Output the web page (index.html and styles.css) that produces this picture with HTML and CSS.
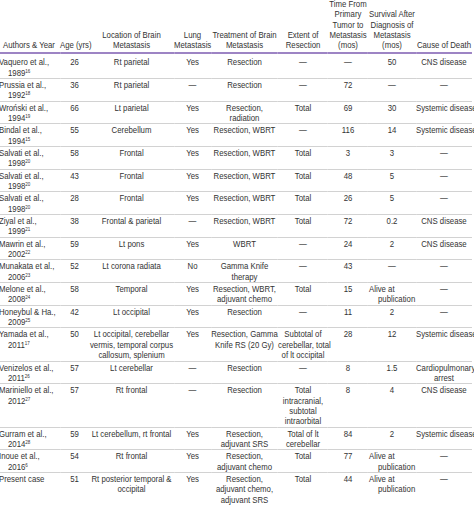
FILE: index.html
```html
<!DOCTYPE html>
<html lang="en">
<head>
<meta charset="utf-8">
<title>Reported cases of brain metastasis</title>
<link rel="stylesheet" href="styles.css">
</head>
<body>
<table class="cases">
  <colgroup>
    <col class="c-auth"><col class="c-age"><col class="c-loc"><col class="c-lung"><col class="c-treat"><col class="c-ext"><col class="c-time"><col class="c-surv"><col class="c-cause">
  </colgroup>
  <thead>
    <tr>
      <th>Authors &amp; Year</th>
      <th>Age (yrs)</th>
      <th>Location of Brain<br>Metastasis</th>
      <th>Lung<br>Metastasis</th>
      <th>Treatment of Brain<br>Metastasis</th>
      <th>Extent of<br>Resection</th>
      <th>Time From<br>Primary<br>Tumor to<br>Metastasis<br>(mos)</th>
      <th>Survival After<br>Diagnosis of<br>Metastasis<br>(mos)</th>
      <th>Cause of Death</th>
    </tr>
  </thead>
  <tbody>
    <tr><td class="hang">Vaquero et al.,<br>1989<sup>16</sup></td><td>26</td><td>Rt parietal</td><td>Yes</td><td>Resection</td><td>—</td><td>—</td><td>50</td><td>CNS disease</td></tr>
    <tr><td class="hang">Prussia et al.,<br>1992<sup>18</sup></td><td>36</td><td>Rt parietal</td><td>—</td><td>Resection</td><td>—</td><td>72</td><td>—</td><td>—</td></tr>
    <tr><td class="hang">Wroński et al.,<br>1994<sup>19</sup></td><td>66</td><td>Lt parietal</td><td>Yes</td><td>Resection,<br>radiation</td><td>Total</td><td>69</td><td>30</td><td>Systemic disease</td></tr>
    <tr><td class="hang">Bindal et al.,<br>1994<sup>15</sup></td><td>55</td><td>Cerebellum</td><td>Yes</td><td>Resection, WBRT</td><td>—</td><td>116</td><td>14</td><td>Systemic disease</td></tr>
    <tr><td class="hang">Salvati et al.,<br>1998<sup>20</sup></td><td>58</td><td>Frontal</td><td>Yes</td><td>Resection, WBRT</td><td>Total</td><td>3</td><td>3</td><td>—</td></tr>
    <tr><td class="hang">Salvati et al.,<br>1998<sup>20</sup></td><td>43</td><td>Frontal</td><td>Yes</td><td>Resection, WBRT</td><td>Total</td><td>48</td><td>5</td><td>—</td></tr>
    <tr><td class="hang">Salvati et al.,<br>1998<sup>20</sup></td><td>28</td><td>Frontal</td><td>Yes</td><td>Resection, WBRT</td><td>Total</td><td>26</td><td>5</td><td>—</td></tr>
    <tr><td class="hang">Ziyal et al.,<br>1999<sup>21</sup></td><td>38</td><td>Frontal &amp; parietal</td><td>—</td><td>Resection, WBRT</td><td>Total</td><td>72</td><td>0.2</td><td>CNS disease</td></tr>
    <tr><td class="hang">Mawrin et al.,<br>2002<sup>22</sup></td><td>59</td><td>Lt pons</td><td>Yes</td><td>WBRT</td><td>—</td><td>24</td><td>2</td><td>CNS disease</td></tr>
    <tr><td class="hang">Munakata et al.,<br>2006<sup>23</sup></td><td>52</td><td>Lt corona radiata</td><td>No</td><td>Gamma Knife<br>therapy</td><td>—</td><td>43</td><td>—</td><td>—</td></tr>
    <tr><td class="hang">Melone et al.,<br>2008<sup>24</sup></td><td>58</td><td>Temporal</td><td>Yes</td><td>Resection, WBRT,<br>adjuvant chemo</td><td>Total</td><td>15</td><td class="hang">Alive at<br>publication</td><td>—</td></tr>
    <tr><td class="hang">Honeybul &amp; Ha.,<br>2009<sup>25</sup></td><td>42</td><td>Lt occipital</td><td>Yes</td><td>Resection</td><td>—</td><td>11</td><td>2</td><td>—</td></tr>
    <tr><td class="hang">Yamada et al.,<br>2011<sup>17</sup></td><td>50</td><td>Lt occipital, cerebellar<br>vermis, temporal corpus<br>callosum, splenium</td><td>Yes</td><td>Resection, Gamma<br>Knife RS (20 Gy)</td><td>Subtotal of<br>cerebellar, total<br>of lt occipital</td><td>28</td><td>12</td><td>Systemic disease</td></tr>
    <tr><td class="hang">Venizelos et al.,<br>2011<sup>26</sup></td><td>57</td><td>Lt cerebellar</td><td>—</td><td>Resection</td><td>—</td><td>8</td><td>1.5</td><td>Cardiopulmonary<br>arrest</td></tr>
    <tr><td class="hang">Mariniello et al.,<br>2012<sup>27</sup></td><td>57</td><td>Rt frontal</td><td>—</td><td>Resection</td><td>Total<br>intracranial,<br>subtotal<br>intraorbital</td><td>8</td><td>4</td><td>CNS disease</td></tr>
    <tr><td class="hang">Gurram et al.,<br>2014<sup>28</sup></td><td>59</td><td>Lt cerebellum, rt frontal</td><td>Yes</td><td>Resection,<br>adjuvant SRS</td><td>Total of lt<br>cerebellar</td><td>84</td><td>2</td><td>Systemic disease</td></tr>
    <tr><td class="hang">Inoue et al.,<br>2016<sup>6</sup></td><td>54</td><td>Rt frontal</td><td>Yes</td><td>Resection,<br>adjuvant chemo</td><td>Total</td><td>77</td><td class="hang">Alive at<br>publication</td><td>—</td></tr>
    <tr><td class="hang">Present case</td><td>51</td><td>Rt posterior temporal &amp;<br>occipital</td><td>Yes</td><td>Resection,<br>adjuvant chemo,<br>adjuvant SRS</td><td>Total</td><td>44</td><td class="hang">Alive at<br>publication</td><td>—</td></tr>
  </tbody>
</table>
</body>
</html>
```
FILE: styles.css
```css
html, body {
  margin: 0;
  padding: 0;
  background: #ffffff;
  overflow: hidden;
}

body {
  font-family: "Liberation Sans Narrow", "Liberation Sans", Arial, sans-serif;
  font-size: 9.5px;
  color: #333333;
}

/* The source table is set in a narrow grotesque; Liberation Sans is
   condensed horizontally to the same proportions. */
.cases {
  border-collapse: collapse;
  table-layout: fixed;
  width: 578px;
  margin: -1px 0 0 -2px;
  transform: scaleX(0.82);
  transform-origin: 0 0;
}

.c-auth { width: 75.6px; }
.c-age { width: 35.4px; }
.c-loc { width: 103.7px; }
.c-lung { width: 45.1px; }
.c-treat { width: 81.7px; }
.c-ext { width: 61px; }
.c-time { width: 48.8px; }
.c-surv { width: 58.5px; }
.c-cause { width: 68.2px; }

.cases th,
.cases td {
  padding: 0;
  text-align: center;
  white-space: nowrap;
  line-height: 10.35px;
  overflow: visible;
}

.cases th {
  font-weight: normal;
  vertical-align: bottom;
  padding-bottom: 1.5px;
  border-bottom: 2px solid #9d84c4;
}

.cases td {
  vertical-align: top;
  padding-top: 1px;
  border-bottom: 1px solid #d2d2d2;
}

.cases tbody tr:first-child td {
  padding-top: 3px;
}

.cases td.hang {
  text-align: left;
  padding-left: 12.2px;
  text-indent: -11px;
}

.cases sup {
  font-size: 5.5px;
  line-height: 0;
  vertical-align: 3.5px;
}
```
